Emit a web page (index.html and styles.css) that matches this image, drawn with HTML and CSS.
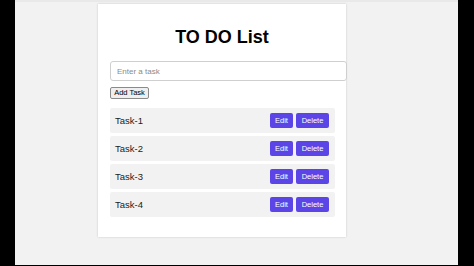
FILE: index.html
```html
<!DOCTYPE html>
<html>
<head>
<meta charset="utf-8">
<link rel="stylesheet" href="styles.css">
</head>
<body>
<div class="screen">
  <div class="card">
    <h1 class="title">TO DO List</h1>
    <input class="task-input" type="text" placeholder="Enter a task">
    <button class="add-btn">Add Task</button>
    <ul class="list">
      <li class="row"><span class="name">Task-1</span><span class="actions"><button class="btn edit">Edit</button><button class="btn del">Delete</button></span></li>
      <li class="row"><span class="name">Task-2</span><span class="actions"><button class="btn edit">Edit</button><button class="btn del">Delete</button></span></li>
      <li class="row"><span class="name">Task-3</span><span class="actions"><button class="btn edit">Edit</button><button class="btn del">Delete</button></span></li>
      <li class="row"><span class="name">Task-4</span><span class="actions"><button class="btn edit">Edit</button><button class="btn del">Delete</button></span></li>
    </ul>
  </div>
</div>
</body>
</html>
```
FILE: styles.css
```css
html, body {
  margin: 0;
  padding: 0;
  background: #000;
  height: 266px;
  overflow: hidden;
  font-family: "Liberation Sans", Arial, sans-serif;
}
.screen {
  margin: 0 16px 0 15px;
  padding-top: 2px;
  height: 265px;
  background: #f2f2f2;
  border-top: 2px solid #e9e9e9;
  box-sizing: border-box;
}
.card {
  margin-left: 83px;
  width: 248px;
  height: 233px;
  box-sizing: border-box;
  background: #fff;
  box-shadow: 0 0 2px rgba(0,0,0,0.18);
  padding: 23px 12px 0 12px;
}
.title {
  margin: 0;
  font-size: 18px;
  line-height: 21px;
  text-align: center;
  font-weight: bold;
  color: #000;
}
.task-input {
  display: block;
  margin-top: 13px;
  width: 237px;
  height: 20px;
  box-sizing: border-box;
  border: 1px solid #cfcfcf;
  border-radius: 3px;
  padding: 0 6px;
  font-family: inherit;
  font-size: 8px;
  outline: none;
}
.task-input::placeholder {
  color: #8a8a8a;
}
.add-btn {
  display: block;
  margin-top: 6px;
  height: 12px;
  width: 39px;
  padding: 0;
  font-family: inherit;
  font-size: 7.5px;
  color: #000;
  background: #efefef;
  border: 1px solid #8a8a8a;
  border-radius: 2px;
  line-height: 10px;
}
.list {
  list-style: none;
  margin: 9px 0 0 0;
  padding: 0;
  display: flex;
  flex-direction: column;
  gap: 3px;
  width: 225px;
}
.row {
  height: 25px;
  background: #f2f2f2;
  border-radius: 2px;
  display: flex;
  align-items: center;
  justify-content: space-between;
  padding: 0 6px 0 5px;
  box-sizing: border-box;
}
.name {
  font-size: 9.5px;
  color: #222;
}
.actions {
  display: flex;
  gap: 3px;
}
.btn {
  height: 15px;
  padding: 0;
  border: none;
  border-radius: 2px;
  background: #5b45e6;
  color: #fff;
  font-family: inherit;
  font-size: 7.5px;
}
.edit { width: 23px; }
.del { width: 33px; }
```
